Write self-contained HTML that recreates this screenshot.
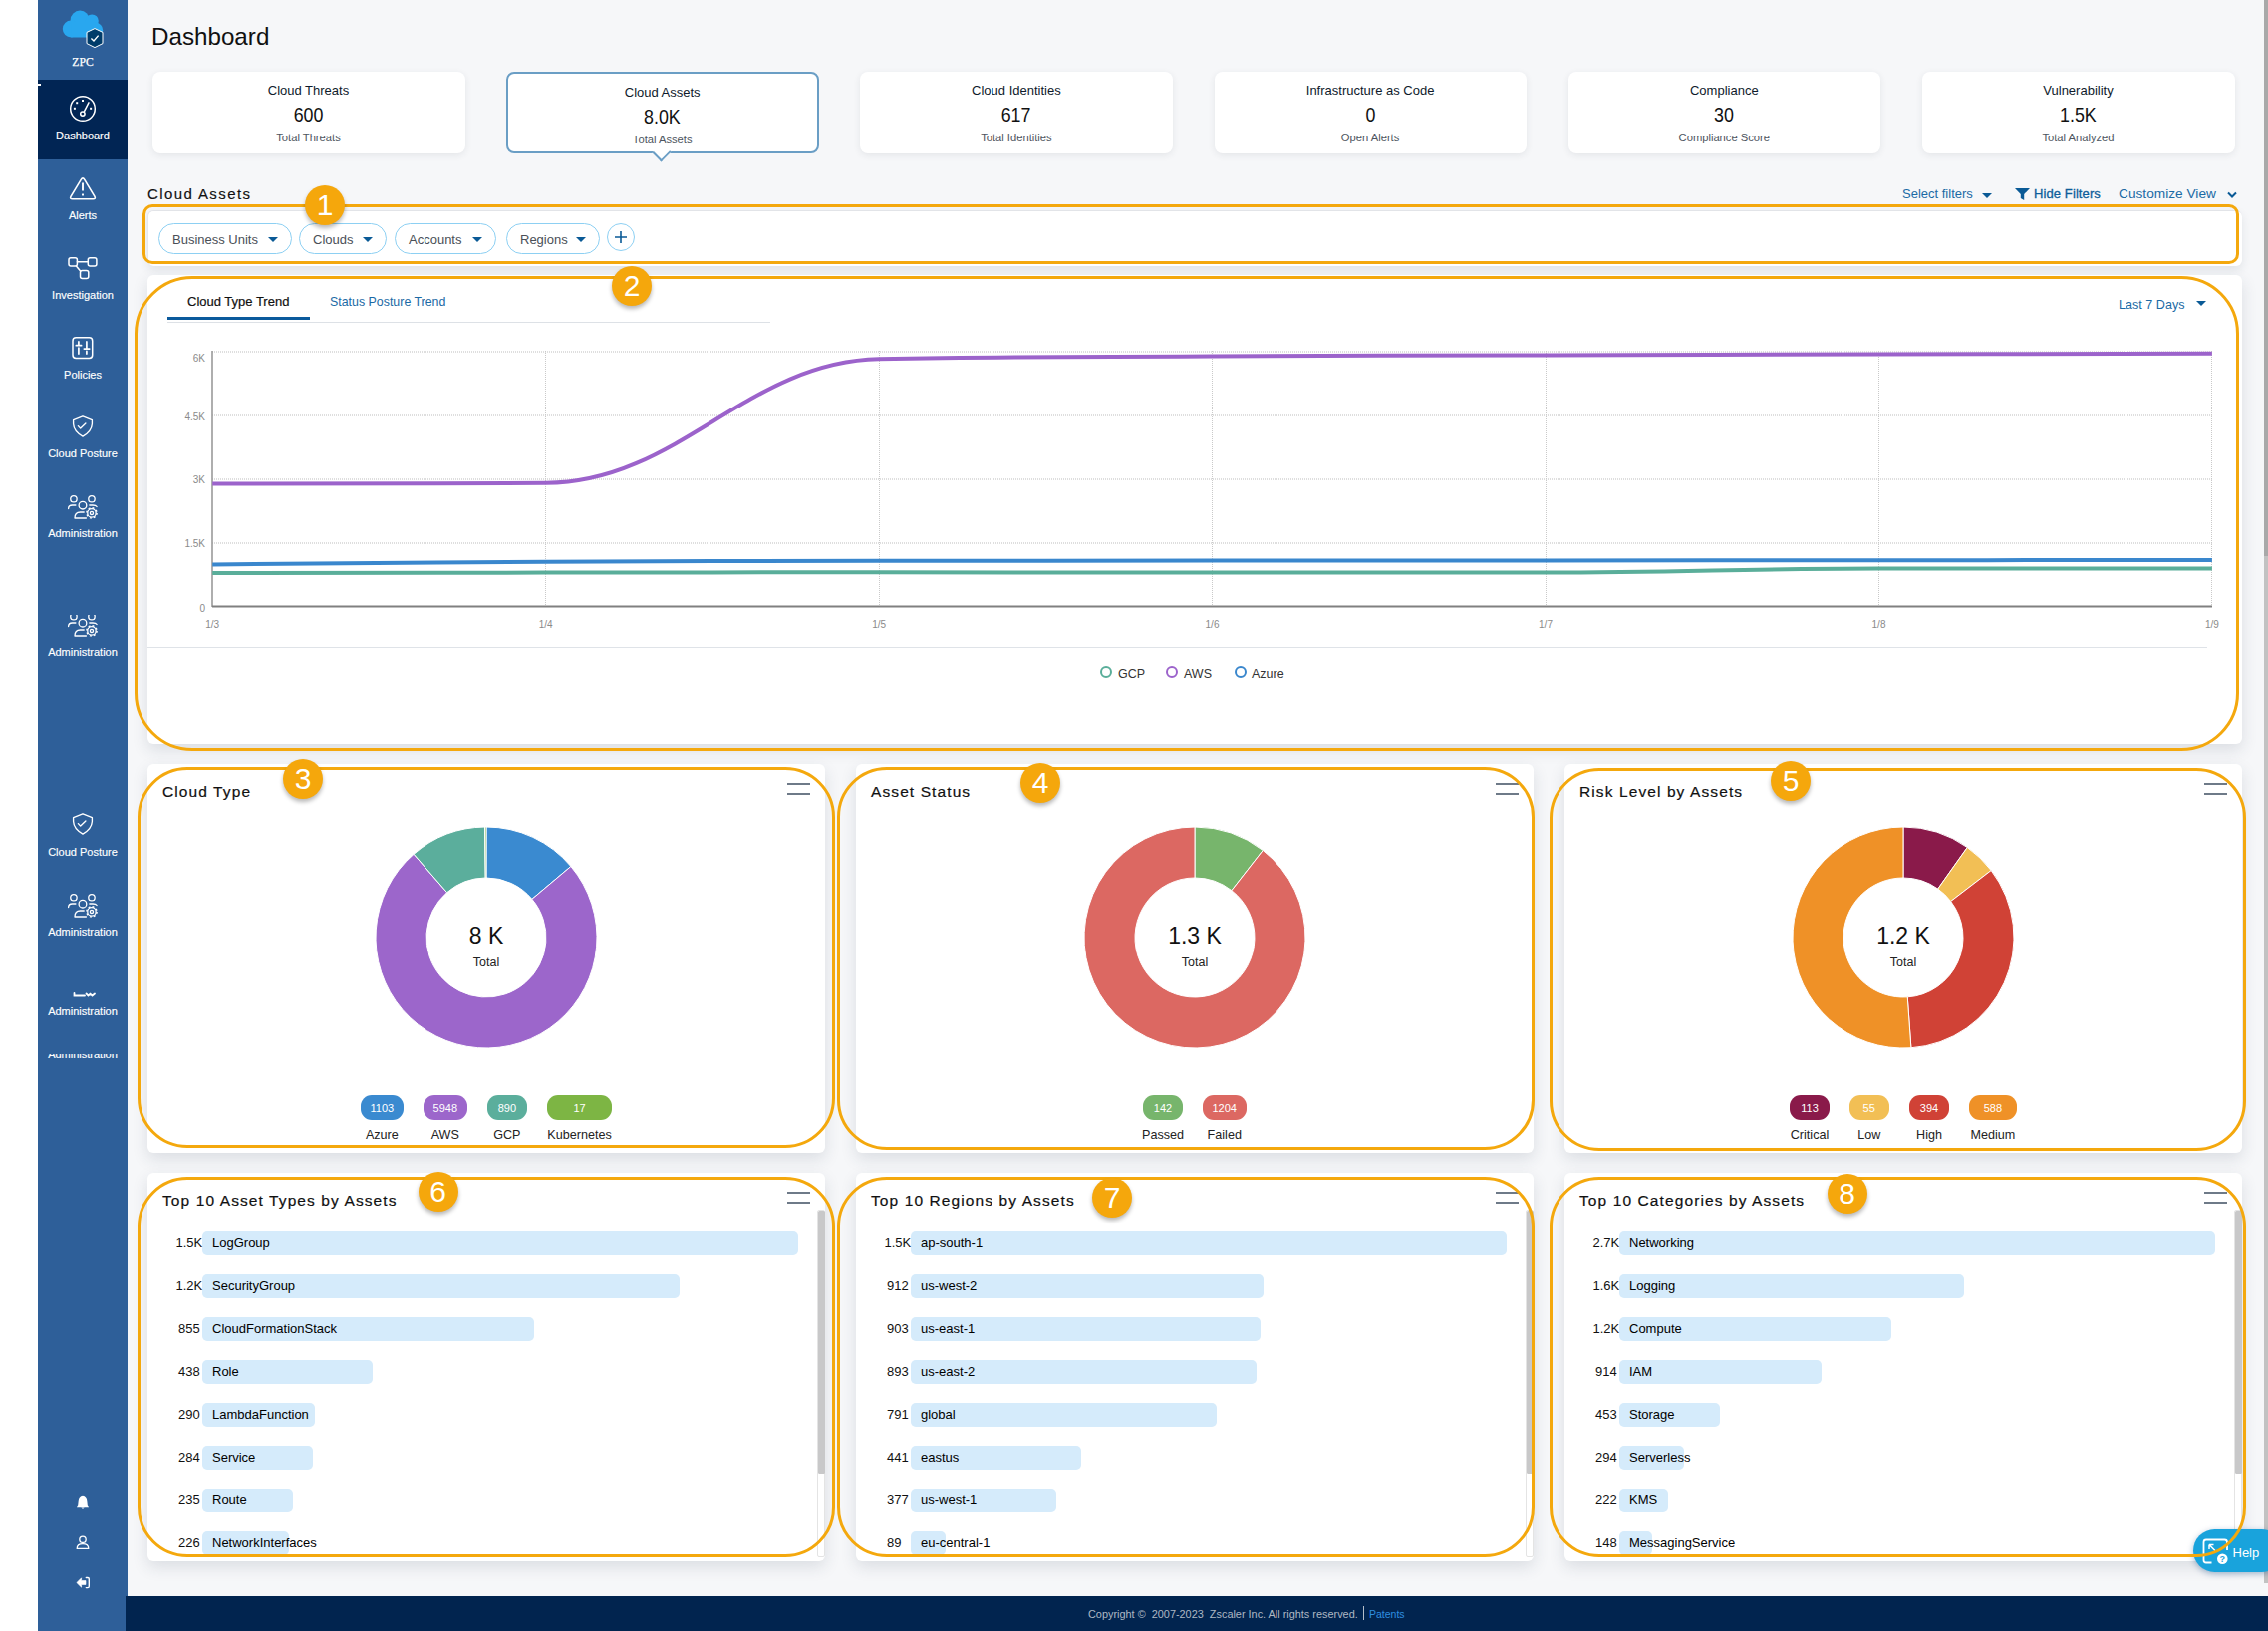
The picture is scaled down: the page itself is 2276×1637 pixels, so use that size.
<!DOCTYPE html>
<html><head><meta charset="utf-8"><title>Dashboard</title>
<style>
*{box-sizing:border-box;margin:0;padding:0}
html,body{width:2276px;height:1637px;overflow:hidden}
body{position:relative;background:#f6f7f9;font-family:"Liberation Sans", sans-serif;color:#1d2430}
.a{position:absolute}
.t{position:absolute;white-space:nowrap;line-height:1}
.card{position:absolute;background:#fff;border-radius:8px;box-shadow:0 6px 16px rgba(40,55,80,.13)}
.stat{position:absolute;background:#fff;border-radius:8px;box-shadow:0 2px 7px rgba(40,50,70,.09);top:72px;width:313.5px;height:82px}
.stat .h{position:absolute;left:0;right:0;top:84px;text-align:center}
.ol{position:absolute;border:3px solid #f4a80d;pointer-events:none;z-index:5}
.badge{position:absolute;width:40px;height:40px;border-radius:50%;background:#f5a70c;color:#fff;font-size:30px;line-height:40px;text-align:center;box-shadow:0 3px 4px rgba(0,0,0,.28);z-index:6}
.navl{position:absolute;left:38px;width:90px;text-align:center;color:#fff;font-size:11px;line-height:1;white-space:nowrap;-webkit-text-stroke:.15px #fff}
.pill{position:absolute;top:224px;height:31px;border:1px solid #8dd0f3;border-radius:16px;background:#fff}
.pill span{position:absolute;top:9px;font-size:13px;color:#4a4f57;line-height:1}
.caret{position:absolute;width:0;height:0;border-left:5px solid transparent;border-right:5px solid transparent;border-top:5px solid #0a5a96}
.ham{position:absolute;width:23px;height:2px;background:#6e7a88}
.lgp{position:absolute;height:25px;border-radius:11px;color:#fff;font-size:11px;line-height:26px;text-align:center}
.lgl{position:absolute;font-size:12.6px;color:#222;white-space:nowrap;line-height:1}
.bar{position:absolute;height:24px;background:#d5ebfb;border-radius:5px}
.bv{position:absolute;font-size:13px;color:#111;text-align:right;line-height:1;white-space:nowrap}
.bl{position:absolute;font-size:13px;color:#000;line-height:1;white-space:nowrap}
</style></head><body>

<div class="a" style="left:0;top:0;width:38px;height:1637px;background:#fff"></div>
<div class="a" style="left:38px;top:0;width:90px;height:1637px;background:#2e5f99"></div>
<div class="a" style="left:38px;top:80px;width:90px;height:80px;background:#012554"></div>
<div class="a" style="left:37px;top:83.5px;width:4px;height:2.5px;background:#fff"></div>
<svg class="a" style="left:38px;top:0" width="90" height="80" viewBox="0 0 90 80">
<g fill="#29a7ef">
<circle cx="42.2" cy="20.2" r="9.6"/><circle cx="54.2" cy="21" r="6.6"/><circle cx="33.3" cy="29" r="8.5"/><circle cx="57.8" cy="30.2" r="7.4"/>
<rect x="33.3" y="22" width="24.5" height="15.5"/>
</g>
<path d="M57,28.6 L65,32.4 L65,43.6 L57,47.6 L49,43.6 L49,32.4 Z" fill="#003c6a" stroke="#fff" stroke-width="1"/>
<path d="M53.4,38.4 L56,41 L60.6,35.6" fill="none" stroke="#fff" stroke-width="1.4"/>
</svg>
<div class="navl" style="top:56.8px;font-family:'Liberation Serif',serif;font-size:11.6px;-webkit-text-stroke:.25px #fff">ZPC</div>
<svg class="a" style="left:38px;top:89px" width="90" height="40" viewBox="0 0 90 40" fill="none" stroke="#fff" stroke-width="1.5" stroke-linecap="round" stroke-linejoin="round"><circle cx="45" cy="20" r="12.3"/><circle cx="44.9" cy="25.1" r="2.2"/><path d="M46.5,22.6 L51,13.8"/><rect x="44" y="11" width="2" height="2" fill="#fff" stroke="none"/><rect x="38.2" y="13.2" width="2" height="2" fill="#fff" stroke="none"/><rect x="35.9" y="18.8" width="2" height="2" fill="#fff" stroke="none"/><rect x="52.1" y="18.8" width="2" height="2" fill="#fff" stroke="none"/></svg>
<div class="navl" style="top:131px;font-size:11px">Dashboard</div>
<svg class="a" style="left:38px;top:170px" width="90" height="40" viewBox="0 0 90 40" fill="none" stroke="#fff" stroke-width="1.5" stroke-linecap="round" stroke-linejoin="round"><path d="M43.2,10.4 Q45,7.4 46.8,10.4 L56.9,27.1 Q58.4,29.7 55.3,29.7 L34.7,29.7 Q31.6,29.7 33.1,27.1 Z" stroke-width="1.6"/><path d="M45,13.6 L45,21.4" stroke-width="1.9" stroke-linecap="butt"/><circle cx="45" cy="25.5" r=".9" fill="#fff" stroke="none"/><rect x="44.1" y="24.7" width="1.8" height="1.6" fill="#fff" stroke="none"/></svg>
<div class="navl" style="top:211px">Alerts</div>
<svg class="a" style="left:38px;top:250px" width="90" height="40" viewBox="0 0 90 40" fill="none" stroke="#fff" stroke-width="1.5" stroke-linecap="round" stroke-linejoin="round"><rect x="31" y="8.7" width="8.4" height="8.4" rx="2"/><rect x="50.3" y="8.7" width="8.6" height="8.4" rx="2"/><rect x="42.5" y="21.6" width="8.3" height="8" rx="2"/><path d="M39.4,12.8 L50.3,12.8 M38.4,17 L42.6,22"/></svg>
<div class="navl" style="top:290.5px">Investigation</div>
<svg class="a" style="left:38px;top:330px" width="90" height="40" viewBox="0 0 90 40" fill="none" stroke="#fff" stroke-width="1.5" stroke-linecap="round" stroke-linejoin="round"><rect x="35" y="8.8" width="19.7" height="20.6" rx="3.2"/><path d="M40.9,12.9 L40.9,16.5 M40.9,19.2 L40.9,25.1 M38.3,16.7 L43.6,16.7 M48.9,12.9 L48.9,20 M48.9,22.4 L48.9,25.1 M46.3,20.1 L51.7,20.1" stroke-width="1.7"/></svg>
<div class="navl" style="top:371px">Policies</div>
<svg class="a" style="left:38px;top:408px" width="90" height="40" viewBox="0 0 90 40" fill="none" stroke="#fff" stroke-width="1.5" stroke-linecap="round" stroke-linejoin="round"><path d="M45,9.8 L35.6,13.6 L35.6,17.5 Q36,25 45,30.1 Q54,25 54.4,17.5 L54.4,13.6 Z" stroke-width="1.35"/><path d="M40.4,19.6 L42.7,22.1 L47.9,17" stroke-width="1.35"/></svg>
<div class="navl" style="top:450px">Cloud Posture</div>
<svg class="a" style="left:38px;top:488px" width="90" height="40" viewBox="0 0 90 40" fill="none" stroke="#fff" stroke-width="1.5" stroke-linecap="round" stroke-linejoin="round"><g transform="translate(25,2)" stroke-width="1.3"><circle cx="10.94" cy="10.73" r="3.2"/><path d="M5.6,20.6 Q5.6,17 9.5,17 L12.9,17"/><circle cx="19.96" cy="17.17" r="3.85"/><path d="M21.2,24 L17.5,24 Q12,24 12,30 L23.4,30"/><circle cx="28.97" cy="10.73" r="3.2"/><path d="M26.8,17 L30,17 Q33.2,17 34.1,18.5"/><circle cx="28.97" cy="24.9" r="4.2"/><circle cx="28.97" cy="24.9" r="5.1" stroke-width="1.5" stroke-dasharray="1.9,2.1" stroke-linecap="butt"/><circle cx="28.97" cy="24.9" r="1.6"/></g></svg>
<div class="navl" style="top:530px">Administration</div>
<div class="a" style="left:0;top:617.2px;width:128px;height:30px;overflow:hidden"><div class="a" style="left:0;top:-617.2px;width:128px;height:660px">
<svg class="a" style="left:38px;top:605.5px" width="90" height="40" viewBox="0 0 90 40" fill="none" stroke="#fff" stroke-width="1.5" stroke-linecap="round" stroke-linejoin="round"><g transform="translate(25,2)" stroke-width="1.3"><circle cx="10.94" cy="10.73" r="3.2"/><path d="M5.6,20.6 Q5.6,17 9.5,17 L12.9,17"/><circle cx="19.96" cy="17.17" r="3.85"/><path d="M21.2,24 L17.5,24 Q12,24 12,30 L23.4,30"/><circle cx="28.97" cy="10.73" r="3.2"/><path d="M26.8,17 L30,17 Q33.2,17 34.1,18.5"/><circle cx="28.97" cy="24.9" r="4.2"/><circle cx="28.97" cy="24.9" r="5.1" stroke-width="1.5" stroke-dasharray="1.9,2.1" stroke-linecap="butt"/><circle cx="28.97" cy="24.9" r="1.6"/></g></svg>
</div></div>
<div class="navl" style="top:648.5px">Administration</div>
<svg class="a" style="left:38px;top:807.2px" width="90" height="40" viewBox="0 0 90 40" fill="none" stroke="#fff" stroke-width="1.5" stroke-linecap="round" stroke-linejoin="round"><path d="M45,9.8 L35.6,13.6 L35.6,17.5 Q36,25 45,30.1 Q54,25 54.4,17.5 L54.4,13.6 Z" stroke-width="1.35"/><path d="M40.4,19.6 L42.7,22.1 L47.9,17" stroke-width="1.35"/></svg>
<div class="navl" style="top:849.5px">Cloud Posture</div>
<svg class="a" style="left:38px;top:888.2px" width="90" height="40" viewBox="0 0 90 40" fill="none" stroke="#fff" stroke-width="1.5" stroke-linecap="round" stroke-linejoin="round"><g transform="translate(25,2)" stroke-width="1.3"><circle cx="10.94" cy="10.73" r="3.2"/><path d="M5.6,20.6 Q5.6,17 9.5,17 L12.9,17"/><circle cx="19.96" cy="17.17" r="3.85"/><path d="M21.2,24 L17.5,24 Q12,24 12,30 L23.4,30"/><circle cx="28.97" cy="10.73" r="3.2"/><path d="M26.8,17 L30,17 Q33.2,17 34.1,18.5"/><circle cx="28.97" cy="24.9" r="4.2"/><circle cx="28.97" cy="24.9" r="5.1" stroke-width="1.5" stroke-dasharray="1.9,2.1" stroke-linecap="butt"/><circle cx="28.97" cy="24.9" r="1.6"/></g></svg>
<div class="navl" style="top:930px">Administration</div>
<svg class="a" style="left:38px;top:990px" width="90" height="14" viewBox="0 0 90 14" fill="none" stroke="#fff" stroke-width="1.8" stroke-linecap="round"><path d="M36.5,7 L36.5,9.5 L47,9.5 M48.5,7.5 L50.5,9.5 L52.5,7.8 L54.5,9.5 L57,7.5"/></svg>
<div class="navl" style="top:1010px">Administration</div>
<div class="a" style="left:38px;top:1058px;width:90px;height:5px;overflow:hidden"><div class="navl" style="left:0;top:-5px">Administration</div></div>
<svg class="a" style="left:70px;top:1498px" width="28" height="100" viewBox="0 0 28 100">
<path d="M13,3.8 Q9,4.2 8.6,9.5 L8.2,13.3 L6.9,15.3 L19.1,15.3 L17.8,13.3 L17.4,9.5 Q17,4.2 13,3.8 Z" fill="#fff"/><path d="M11.3,15.5 Q13,17.8 14.7,15.5 Z" fill="#fff"/>
<g fill="none" stroke="#fff" stroke-width="1.3"><circle cx="13" cy="47.3" r="3.2"/><path d="M7.2,56.4 Q7.2,51.6 13,51.6 Q18.8,51.6 18.8,56.4 Z" stroke-linejoin="round"/></g>
<path d="M6.9,90.5 L11.6,85.8 L11.6,88.5 L16,88.5 L16,92.5 L11.6,92.5 L11.6,95.2 Z" fill="#fff" stroke="#fff" stroke-width=".6" stroke-linejoin="round"/><path d="M16.3,85.5 L18,85.5 Q19.3,85.5 19.3,86.8 L19.3,94.3 Q19.3,95.6 18,95.6 L16.3,95.6" fill="none" stroke="#fff" stroke-width="1.4" stroke-linecap="round"/>
</svg>
<div class="a" style="left:126px;top:1602px;width:2150px;height:35px;background:#01244f"></div>
<div class="t" style="left:1092px;top:1615px;font-size:10.9px;color:#aeb8c4">Copyright&nbsp;©&nbsp;&nbsp;2007-2023&nbsp;&nbsp;Zscaler Inc. All rights reserved.</div>
<div class="a" style="left:1368px;top:1612px;width:1px;height:14px;background:#b4bec9"></div>
<div class="t" style="left:1374px;top:1615px;font-size:10.5px;color:#2f8fe0">Patents</div>
<div class="a" style="left:2272px;top:0;width:4px;height:1589px;background:#c2c2c2"></div><div class="a" style="left:2272px;top:0;width:4px;height:558px;background:#a9a9a9"></div>
<div class="t" style="left:152px;top:25px;font-size:24.2px;color:#111">Dashboard</div>
<div class="stat" style="left:153.0px"></div>
<div class="t" style="left:153.0px;width:313px;text-align:center;top:84px;font-size:13px;color:#0e1a2b">Cloud Threats</div>
<div class="t" style="left:153.0px;width:313px;text-align:center;top:106px;font-size:19.8px;color:#111"><span style="display:inline-block;transform:scaleX(.9)">600</span></div>
<div class="t" style="left:153.0px;width:313px;text-align:center;top:133px;font-size:11.2px;color:#4d5560">Total Threats</div>
<div class="stat" style="left:508.2px;border:2px solid #6a9ec5;box-shadow:none"></div>
<div class="a" style="left:657.2px;top:146px;width:14px;height:14px;background:#fff;border-right:2px solid #6a9ec5;border-bottom:2px solid #6a9ec5;transform:rotate(45deg) scaleX(.9)"></div>
<div class="t" style="left:508.2px;width:313px;text-align:center;top:86px;font-size:13px;color:#0e1a2b">Cloud Assets</div>
<div class="t" style="left:508.2px;width:313px;text-align:center;top:108px;font-size:19.8px;color:#111"><span style="display:inline-block;transform:scaleX(.9)">8.0K</span></div>
<div class="t" style="left:508.2px;width:313px;text-align:center;top:135px;font-size:11.2px;color:#4d5560">Total Assets</div>
<div class="stat" style="left:863.4px"></div>
<div class="t" style="left:863.4px;width:313px;text-align:center;top:84px;font-size:13px;color:#0e1a2b">Cloud Identities</div>
<div class="t" style="left:863.4px;width:313px;text-align:center;top:106px;font-size:19.8px;color:#111"><span style="display:inline-block;transform:scaleX(.9)">617</span></div>
<div class="t" style="left:863.4px;width:313px;text-align:center;top:133px;font-size:11.2px;color:#4d5560">Total Identities</div>
<div class="stat" style="left:1218.6px"></div>
<div class="t" style="left:1218.6px;width:313px;text-align:center;top:84px;font-size:13px;color:#0e1a2b">Infrastructure as Code</div>
<div class="t" style="left:1218.6px;width:313px;text-align:center;top:106px;font-size:19.8px;color:#111"><span style="display:inline-block;transform:scaleX(.9)">0</span></div>
<div class="t" style="left:1218.6px;width:313px;text-align:center;top:133px;font-size:11.2px;color:#4d5560">Open Alerts</div>
<div class="stat" style="left:1573.8px"></div>
<div class="t" style="left:1573.8px;width:313px;text-align:center;top:84px;font-size:13px;color:#0e1a2b">Compliance</div>
<div class="t" style="left:1573.8px;width:313px;text-align:center;top:106px;font-size:19.8px;color:#111"><span style="display:inline-block;transform:scaleX(.9)">30</span></div>
<div class="t" style="left:1573.8px;width:313px;text-align:center;top:133px;font-size:11.2px;color:#4d5560">Compliance Score</div>
<div class="stat" style="left:1929.0px"></div>
<div class="t" style="left:1929.0px;width:313px;text-align:center;top:84px;font-size:13px;color:#0e1a2b">Vulnerability</div>
<div class="t" style="left:1929.0px;width:313px;text-align:center;top:106px;font-size:19.8px;color:#111"><span style="display:inline-block;transform:scaleX(.9)">1.5K</span></div>
<div class="t" style="left:1929.0px;width:313px;text-align:center;top:133px;font-size:11.2px;color:#4d5560">Total Analyzed</div>
<div class="t" style="left:148px;top:186.5px;font-size:15px;-webkit-text-stroke:.15px #111;letter-spacing:1.4px;color:#111">Cloud Assets</div>
<div class="t" style="left:1909px;top:188px;font-size:13px;color:#1b6aa5">Select filters</div>
<div class="caret" style="left:1989px;top:194px"></div>
<svg class="a" style="left:2022px;top:189px" width="15" height="12" viewBox="0 0 15 12"><path d="M0,0 L15,0 L9.2,6 L9.2,12 L5.8,10 L5.8,6 Z" fill="#0a5a96"/></svg>
<div class="t" style="left:2041px;top:188px;font-size:13px;color:#0d5d9a;letter-spacing:.1px;-webkit-text-stroke:.3px #0d5d9a">Hide Filters</div>
<div class="t" style="left:2126px;top:188px;font-size:13.7px;color:#1b6aa5">Customize View</div>
<svg class="a" style="left:2235px;top:192px" width="10" height="8" viewBox="0 0 10 8"><path d="M1,1.5 L5,5.5 L9,1.5" fill="none" stroke="#0a5a96" stroke-width="2"/></svg>
<div class="card" style="left:148px;top:211px;width:2102px;height:56px;border-radius:6px;border-top:1px solid #e2e4e8;border-left:1px solid #e6e8eb;box-shadow:0 4px 10px rgba(40,55,80,.10)"></div>
<div class="pill" style="left:159px;width:134px"><span style="left:13px">Business Units</span><div class="caret" style="right:13px;top:13px"></div></div>
<div class="pill" style="left:300px;width:88px"><span style="left:13px">Clouds</span><div class="caret" style="right:13px;top:13px"></div></div>
<div class="pill" style="left:396px;width:102px"><span style="left:13px">Accounts</span><div class="caret" style="right:13px;top:13px"></div></div>
<div class="pill" style="left:508px;width:94px"><span style="left:13px">Regions</span><div class="caret" style="right:13px;top:13px"></div></div>
<div class="a" style="left:609px;top:224px;width:28px;height:28px;border:1px solid #8dd0f3;border-radius:50%;background:#fff"></div>
<svg class="a" style="left:609px;top:224px" width="28" height="28"><path d="M14,8 L14,20 M8,14 L20,14" stroke="#0a5a96" stroke-width="1.6"/></svg>
<div class="ol" style="left:143px;top:205px;width:2104px;height:60px;border-radius:10px"></div>
<div class="card" style="left:148px;top:276px;width:2102px;height:471px;border-radius:6px"></div>
<div class="t" style="left:188px;top:296px;font-size:13px;color:#111;-webkit-text-stroke:.2px #111">Cloud Type Trend</div>
<div class="t" style="left:331px;top:297px;font-size:12.4px;color:#1b6aa5">Status Posture Trend</div>
<div class="a" style="left:168px;top:323px;width:605px;height:1px;background:#dde1e6"></div>
<div class="a" style="left:168px;top:318px;width:143px;height:3px;background:#0b5a9c"></div>
<div class="t" style="left:2126px;top:300px;font-size:12.6px;color:#1b6aa5">Last 7 Days</div>
<div class="caret" style="left:2204px;top:302px"></div>
<svg class="a" style="left:0;top:0" width="2276" height="700" viewBox="0 0 2276 700"><line x1="213" y1="353" x2="2220" y2="353" stroke="#dedede" stroke-width="2" stroke-dasharray="1,1"/><line x1="213" y1="417" x2="2220" y2="417" stroke="#dedede" stroke-width="2" stroke-dasharray="1,1"/><line x1="213" y1="481" x2="2220" y2="481" stroke="#dedede" stroke-width="2" stroke-dasharray="1,1"/><line x1="213" y1="545" x2="2220" y2="545" stroke="#dedede" stroke-width="2" stroke-dasharray="1,1"/><line x1="547.5" y1="352" x2="547.5" y2="608" stroke="#c9c9c9" stroke-width="1" stroke-dasharray="1,1"/><line x1="882.5" y1="352" x2="882.5" y2="608" stroke="#c9c9c9" stroke-width="1" stroke-dasharray="1,1"/><line x1="1216.5" y1="352" x2="1216.5" y2="608" stroke="#c9c9c9" stroke-width="1" stroke-dasharray="1,1"/><line x1="1551.5" y1="352" x2="1551.5" y2="608" stroke="#c9c9c9" stroke-width="1" stroke-dasharray="1,1"/><line x1="1885.5" y1="352" x2="1885.5" y2="608" stroke="#c9c9c9" stroke-width="1" stroke-dasharray="1,1"/><line x1="2219.5" y1="352" x2="2219.5" y2="608" stroke="#c9c9c9" stroke-width="1" stroke-dasharray="1,1"/><line x1="213" y1="352" x2="213" y2="609" stroke="#9a9a9a" stroke-width="1.6"/><line x1="213" y1="608.5" x2="2220" y2="608.5" stroke="#808080" stroke-width="2"/><path d="M213.20,575.00 C213.20,575.00 413.87,574.74 547.65,574.60 C681.43,574.46 748.32,574.30 882.10,574.30 C1015.88,574.30 1082.77,574.60 1216.55,574.60 C1350.33,574.60 1417.22,574.60 1551.00,574.60 C1684.78,574.60 1751.67,570.60 1885.45,570.60 C2019.23,570.60 2219.90,570.60 2219.90,570.60" fill="none" stroke="#5aae9a" stroke-width="4" stroke-linecap="butt"/><path d="M213.20,566.40 C213.20,566.40 413.87,564.44 547.65,563.70 C681.43,562.96 748.32,562.80 882.10,562.70 C1015.88,562.60 1082.77,562.64 1216.55,562.60 C1350.33,562.56 1417.22,562.58 1551.00,562.50 C1684.78,562.42 1751.67,562.30 1885.45,562.20 C2019.23,562.10 2219.90,562.00 2219.90,562.00" fill="none" stroke="#3a87cd" stroke-width="4" stroke-linecap="butt"/><path d="M213.20,485.60 C213.20,485.60 413.87,485.60 547.65,484.80 C681.43,484.00 748.32,363.10 882.10,360.30 C1015.88,357.50 1082.77,358.26 1216.55,357.50 C1350.33,356.74 1417.22,356.90 1551.00,356.50 C1684.78,356.10 1751.67,355.84 1885.45,355.50 C2019.23,355.16 2219.90,354.80 2219.90,354.80" fill="none" stroke="#9c63cb" stroke-width="4" stroke-linecap="butt"/></svg>
<div class="t" style="left:150px;width:56px;text-align:right;top:354.5px;font-size:10px;color:#8a8a8a">6K</div>
<div class="t" style="left:150px;width:56px;text-align:right;top:413.5px;font-size:10px;color:#8a8a8a">4.5K</div>
<div class="t" style="left:150px;width:56px;text-align:right;top:476.5px;font-size:10px;color:#8a8a8a">3K</div>
<div class="t" style="left:150px;width:56px;text-align:right;top:540.5px;font-size:10px;color:#8a8a8a">1.5K</div>
<div class="t" style="left:150px;width:56px;text-align:right;top:605.5px;font-size:10px;color:#8a8a8a">0</div>
<div class="t" style="left:193.2px;width:40px;text-align:center;top:621.5px;font-size:10px;color:#8a8a8a">1/3</div>
<div class="t" style="left:527.6px;width:40px;text-align:center;top:621.5px;font-size:10px;color:#8a8a8a">1/4</div>
<div class="t" style="left:862.1px;width:40px;text-align:center;top:621.5px;font-size:10px;color:#8a8a8a">1/5</div>
<div class="t" style="left:1196.5px;width:40px;text-align:center;top:621.5px;font-size:10px;color:#8a8a8a">1/6</div>
<div class="t" style="left:1531.0px;width:40px;text-align:center;top:621.5px;font-size:10px;color:#8a8a8a">1/7</div>
<div class="t" style="left:1865.5px;width:40px;text-align:center;top:621.5px;font-size:10px;color:#8a8a8a">1/8</div>
<div class="t" style="left:2199.9px;width:40px;text-align:center;top:621.5px;font-size:10px;color:#8a8a8a">1/9</div>
<div class="a" style="left:148px;top:649px;width:2067px;height:1px;background:#dfe3e8"></div>
<div class="a" style="left:1104px;top:668.2px;width:12px;height:12px;border:2px solid #5aae9a;border-radius:50%"></div>
<div class="t" style="left:1122px;top:670px;font-size:12.5px;color:#333">GCP</div>
<div class="a" style="left:1170px;top:668.2px;width:12px;height:12px;border:2px solid #9c63cb;border-radius:50%"></div>
<div class="t" style="left:1188px;top:670px;font-size:12.5px;color:#333">AWS</div>
<div class="a" style="left:1239px;top:668.2px;width:12px;height:12px;border:2px solid #3a87cd;border-radius:50%"></div>
<div class="t" style="left:1256px;top:670px;font-size:12.5px;color:#333">Azure</div>
<div class="ol" style="left:135px;top:277px;width:2112px;height:477px;border-radius:58px"></div>
<div class="card" style="left:148px;top:767px;width:680px;height:390px;border-radius:6px"></div>
<div class="t" style="left:163px;top:786.5px;font-size:15.5px;-webkit-text-stroke:.2px #111;letter-spacing:1.1px;color:#111">Cloud Type</div>
<div class="ham" style="left:790px;top:786px"></div><div class="ham" style="left:790px;top:796px"></div>
<svg class="a" style="left:373px;top:826px" width="230" height="230" viewBox="373 826 230 230"><path d="M488.00,830.00 A111,111 0 0 1 572.90,869.50 L533.89,902.35 A60,60 0 0 0 488.00,881.00 Z" fill="#3a8ad0" stroke="#fff" stroke-width="1" stroke-linejoin="round"/><path d="M572.90,869.50 A111,111 0 1 1 415.13,857.27 L448.61,895.74 A60,60 0 1 0 533.89,902.35 Z" fill="#9c66cb" stroke="#fff" stroke-width="1" stroke-linejoin="round"/><path d="M415.13,857.27 A111,111 0 0 1 486.51,830.01 L487.19,881.01 A60,60 0 0 0 448.61,895.74 Z" fill="#5bae9c" stroke="#fff" stroke-width="1" stroke-linejoin="round"/><path d="M486.51,830.01 A111,111 0 0 1 488.00,830.00 L488.00,881.00 A60,60 0 0 0 487.19,881.01 Z" fill="#7db544" stroke="#fff" stroke-width="1" stroke-linejoin="round"/></svg>
<div class="t" style="left:428px;width:120px;text-align:center;top:928px;font-size:23px;color:#111">8 K</div>
<div class="t" style="left:428px;width:120px;text-align:center;top:959.5px;font-size:12.5px;color:#222">Total</div>
<div class="lgp" style="left:361.7px;top:1099px;width:43.30000000000001px;background:#3a8ad0">1103</div>
<div class="lgl" style="left:341.7px;width:83.30000000000001px;text-align:center;top:1132.5px">Azure</div>
<div class="lgp" style="left:424.6px;top:1099px;width:44.39999999999998px;background:#9c66cb">5948</div>
<div class="lgl" style="left:404.6px;width:84.39999999999998px;text-align:center;top:1132.5px">AWS</div>
<div class="lgp" style="left:488.7px;top:1099px;width:40.30000000000001px;background:#5bae9c">890</div>
<div class="lgl" style="left:468.7px;width:80.30000000000001px;text-align:center;top:1132.5px">GCP</div>
<div class="lgp" style="left:549px;top:1099px;width:65px;background:#7db544">17</div>
<div class="lgl" style="left:529px;width:105px;text-align:center;top:1132.5px">Kubernetes</div>
<div class="ol" style="left:138px;top:770px;width:700px;height:382px;border-radius:50px"></div>
<div class="card" style="left:859px;top:767px;width:680px;height:390px;border-radius:6px"></div>
<div class="t" style="left:874px;top:786.5px;font-size:15.5px;-webkit-text-stroke:.2px #111;letter-spacing:1.1px;color:#111">Asset Status</div>
<div class="ham" style="left:1501px;top:786px"></div><div class="ham" style="left:1501px;top:796px"></div>
<svg class="a" style="left:1084px;top:826px" width="230" height="230" viewBox="1084 826 230 230"><path d="M1199.00,830.00 A111,111 0 0 1 1267.31,853.51 L1235.92,893.71 A60,60 0 0 0 1199.00,881.00 Z" fill="#77b56c" stroke="#fff" stroke-width="1" stroke-linejoin="round"/><path d="M1267.31,853.51 A111,111 0 1 1 1199.00,830.00 L1199.00,881.00 A60,60 0 1 0 1235.92,893.71 Z" fill="#dc6862" stroke="#fff" stroke-width="1" stroke-linejoin="round"/></svg>
<div class="t" style="left:1139px;width:120px;text-align:center;top:928px;font-size:23px;color:#111">1.3 K</div>
<div class="t" style="left:1139px;width:120px;text-align:center;top:959.5px;font-size:12.5px;color:#222">Total</div>
<div class="lgp" style="left:1147px;top:1099px;width:40px;background:#77b56c">142</div>
<div class="lgl" style="left:1127px;width:80px;text-align:center;top:1132.5px">Passed</div>
<div class="lgp" style="left:1207px;top:1099px;width:43.5px;background:#dc6862">1204</div>
<div class="lgl" style="left:1187px;width:83.5px;text-align:center;top:1132.5px">Failed</div>
<div class="ol" style="left:840px;top:770px;width:700px;height:384px;border-radius:50px"></div>
<div class="card" style="left:1570px;top:767px;width:680px;height:390px;border-radius:6px"></div>
<div class="t" style="left:1585px;top:786.5px;font-size:15.5px;-webkit-text-stroke:.2px #111;letter-spacing:1.1px;color:#111">Risk Level by Assets</div>
<div class="ham" style="left:2212px;top:786px"></div><div class="ham" style="left:2212px;top:796px"></div>
<svg class="a" style="left:1795px;top:826px" width="230" height="230" viewBox="1795 826 230 230"><path d="M1910.00,830.00 A111,111 0 0 1 1974.26,850.49 L1944.73,892.08 A60,60 0 0 0 1910.00,881.00 Z" fill="#8a1a4a" stroke="#fff" stroke-width="1" stroke-linejoin="round"/><path d="M1974.26,850.49 A111,111 0 0 1 1998.17,873.57 L1957.66,904.55 A60,60 0 0 0 1944.73,892.08 Z" fill="#f2bf55" stroke="#fff" stroke-width="1" stroke-linejoin="round"/><path d="M1998.17,873.57 A111,111 0 0 1 1917.88,1051.72 L1914.26,1000.85 A60,60 0 0 0 1957.66,904.55 Z" fill="#d04236" stroke="#fff" stroke-width="1" stroke-linejoin="round"/><path d="M1917.88,1051.72 A111,111 0 1 1 1910.00,830.00 L1910.00,881.00 A60,60 0 1 0 1914.26,1000.85 Z" fill="#ef9127" stroke="#fff" stroke-width="1" stroke-linejoin="round"/></svg>
<div class="t" style="left:1850px;width:120px;text-align:center;top:928px;font-size:23px;color:#111">1.2 K</div>
<div class="t" style="left:1850px;width:120px;text-align:center;top:959.5px;font-size:12.5px;color:#222">Total</div>
<div class="lgp" style="left:1796px;top:1099px;width:40px;background:#8a1a4a">113</div>
<div class="lgl" style="left:1776px;width:80px;text-align:center;top:1132.5px">Critical</div>
<div class="lgp" style="left:1855.7px;top:1099px;width:40.0px;background:#f2bf55">55</div>
<div class="lgl" style="left:1835.7px;width:80.0px;text-align:center;top:1132.5px">Low</div>
<div class="lgp" style="left:1916px;top:1099px;width:40px;background:#d04236">394</div>
<div class="lgl" style="left:1896px;width:80px;text-align:center;top:1132.5px">High</div>
<div class="lgp" style="left:1975.7px;top:1099px;width:48.299999999999955px;background:#ef9127">588</div>
<div class="lgl" style="left:1955.7px;width:88.29999999999995px;text-align:center;top:1132.5px">Medium</div>
<div class="ol" style="left:1555px;top:771px;width:699px;height:384px;border-radius:50px"></div>
<div class="card" style="left:148px;top:1177px;width:680px;height:390px;border-radius:6px"></div>
<div class="t" style="left:163px;top:1196.5px;font-size:15.5px;-webkit-text-stroke:.2px #111;letter-spacing:1.1px;color:#111">Top 10 Asset Types by Assets</div>
<div class="ham" style="left:790px;top:1196px"></div><div class="ham" style="left:790px;top:1206px"></div>
<div class="a" style="left:820px;top:1214px;width:8px;height:349px;border:1px solid #e4e4e4;border-radius:2px;background:#fff"></div>
<div class="a" style="left:821px;top:1215px;width:7px;height:264px;border-radius:1.5px;background:#c8c8c9"></div>
<div class="a" style="left:148px;top:1215px;width:670px;height:348px;overflow:hidden">
<div class="bar" style="left:55px;top:21px;width:598.0px"></div>
<div class="bv" style="left:28.5px;text-align:left;top:26px">1.5K</div>
<div class="bl" style="left:65px;top:26px">LogGroup</div>
<div class="bar" style="left:55px;top:64px;width:479.4px"></div>
<div class="bv" style="left:28.5px;text-align:left;top:69px">1.2K</div>
<div class="bl" style="left:65px;top:69px">SecurityGroup</div>
<div class="bar" style="left:55px;top:107px;width:332.7px"></div>
<div class="bv" style="left:31px;text-align:left;top:112px">855</div>
<div class="bl" style="left:65px;top:112px">CloudFormationStack</div>
<div class="bar" style="left:55px;top:150px;width:170.8px"></div>
<div class="bv" style="left:31px;text-align:left;top:155px">438</div>
<div class="bl" style="left:65px;top:155px">Role</div>
<div class="bar" style="left:55px;top:193px;width:112.7px"></div>
<div class="bv" style="left:31px;text-align:left;top:198px">290</div>
<div class="bl" style="left:65px;top:198px">LambdaFunction</div>
<div class="bar" style="left:55px;top:236px;width:110.5px"></div>
<div class="bv" style="left:31px;text-align:left;top:241px">284</div>
<div class="bl" style="left:65px;top:241px">Service</div>
<div class="bar" style="left:55px;top:279px;width:90.5px"></div>
<div class="bv" style="left:31px;text-align:left;top:284px">235</div>
<div class="bl" style="left:65px;top:284px">Route</div>
<div class="bar" style="left:55px;top:322px;width:87.3px"></div>
<div class="bv" style="left:31px;text-align:left;top:327px">226</div>
<div class="bl" style="left:65px;top:327px">NetworkInterfaces</div>
</div>
<div class="ol" style="left:138px;top:1181px;width:700px;height:382px;border-radius:50px"></div>
<div class="card" style="left:859px;top:1177px;width:680px;height:390px;border-radius:6px"></div>
<div class="t" style="left:874px;top:1196.5px;font-size:15.5px;-webkit-text-stroke:.2px #111;letter-spacing:1.1px;color:#111">Top 10 Regions by Assets</div>
<div class="ham" style="left:1501px;top:1196px"></div><div class="ham" style="left:1501px;top:1206px"></div>
<div class="a" style="left:1531px;top:1214px;width:8px;height:349px;border:1px solid #e4e4e4;border-radius:2px;background:#fff"></div>
<div class="a" style="left:1532px;top:1215px;width:7px;height:264px;border-radius:1.5px;background:#c8c8c9"></div>
<div class="a" style="left:859px;top:1215px;width:670px;height:348px;overflow:hidden">
<div class="bar" style="left:55px;top:21px;width:598.0px"></div>
<div class="bv" style="left:28.5px;text-align:left;top:26px">1.5K</div>
<div class="bl" style="left:65px;top:26px">ap-south-1</div>
<div class="bar" style="left:55px;top:64px;width:354.0px"></div>
<div class="bv" style="left:31px;text-align:left;top:69px">912</div>
<div class="bl" style="left:65px;top:69px">us-west-2</div>
<div class="bar" style="left:55px;top:107px;width:350.8px"></div>
<div class="bv" style="left:31px;text-align:left;top:112px">903</div>
<div class="bl" style="left:65px;top:112px">us-east-1</div>
<div class="bar" style="left:55px;top:150px;width:347.0px"></div>
<div class="bv" style="left:31px;text-align:left;top:155px">893</div>
<div class="bl" style="left:65px;top:155px">us-east-2</div>
<div class="bar" style="left:55px;top:193px;width:307.0px"></div>
<div class="bv" style="left:31px;text-align:left;top:198px">791</div>
<div class="bl" style="left:65px;top:198px">global</div>
<div class="bar" style="left:55px;top:236px;width:170.8px"></div>
<div class="bv" style="left:31px;text-align:left;top:241px">441</div>
<div class="bl" style="left:65px;top:241px">eastus</div>
<div class="bar" style="left:55px;top:279px;width:145.7px"></div>
<div class="bv" style="left:31px;text-align:left;top:284px">377</div>
<div class="bl" style="left:65px;top:284px">us-west-1</div>
<div class="bar" style="left:55px;top:322px;width:34.6px"></div>
<div class="bv" style="left:31px;text-align:left;top:327px">89</div>
<div class="bl" style="left:65px;top:327px">eu-central-1</div>
</div>
<div class="ol" style="left:840px;top:1181px;width:700px;height:382px;border-radius:50px"></div>
<div class="card" style="left:1570px;top:1177px;width:680px;height:390px;border-radius:6px"></div>
<div class="t" style="left:1585px;top:1196.5px;font-size:15.5px;-webkit-text-stroke:.2px #111;letter-spacing:1.1px;color:#111">Top 10 Categories by Assets</div>
<div class="ham" style="left:2212px;top:1196px"></div><div class="ham" style="left:2212px;top:1206px"></div>
<div class="a" style="left:2242px;top:1214px;width:8px;height:349px;border:1px solid #e4e4e4;border-radius:2px;background:#fff"></div>
<div class="a" style="left:2243px;top:1215px;width:7px;height:264px;border-radius:1.5px;background:#c8c8c9"></div>
<div class="a" style="left:1570px;top:1215px;width:670px;height:348px;overflow:hidden">
<div class="bar" style="left:55px;top:21px;width:598.0px"></div>
<div class="bv" style="left:28.5px;text-align:left;top:26px">2.7K</div>
<div class="bl" style="left:65px;top:26px">Networking</div>
<div class="bar" style="left:55px;top:64px;width:346.0px"></div>
<div class="bv" style="left:28.5px;text-align:left;top:69px">1.6K</div>
<div class="bl" style="left:65px;top:69px">Logging</div>
<div class="bar" style="left:55px;top:107px;width:273.0px"></div>
<div class="bv" style="left:28.5px;text-align:left;top:112px">1.2K</div>
<div class="bl" style="left:65px;top:112px">Compute</div>
<div class="bar" style="left:55px;top:150px;width:202.8px"></div>
<div class="bv" style="left:31px;text-align:left;top:155px">914</div>
<div class="bl" style="left:65px;top:155px">IAM</div>
<div class="bar" style="left:55px;top:193px;width:100.7px"></div>
<div class="bv" style="left:31px;text-align:left;top:198px">453</div>
<div class="bl" style="left:65px;top:198px">Storage</div>
<div class="bar" style="left:55px;top:236px;width:65.0px"></div>
<div class="bv" style="left:31px;text-align:left;top:241px">294</div>
<div class="bl" style="left:65px;top:241px">Serverless</div>
<div class="bar" style="left:55px;top:279px;width:48.6px"></div>
<div class="bv" style="left:31px;text-align:left;top:284px">222</div>
<div class="bl" style="left:65px;top:284px">KMS</div>
<div class="bar" style="left:55px;top:322px;width:33.0px"></div>
<div class="bv" style="left:31px;text-align:left;top:327px">148</div>
<div class="bl" style="left:65px;top:327px">MessagingService</div>
</div>
<div class="ol" style="left:1555px;top:1181px;width:699px;height:382px;border-radius:50px"></div>
<div class="badge" style="left:306px;top:186px">1</div>
<div class="badge" style="left:614px;top:267px">2</div>
<div class="badge" style="left:284px;top:762px">3</div>
<div class="badge" style="left:1024px;top:766px">4</div>
<div class="badge" style="left:1777px;top:764px">5</div>
<div class="badge" style="left:419.5px;top:1176px">6</div>
<div class="badge" style="left:1096px;top:1182px">7</div>
<div class="badge" style="left:1833.5px;top:1178px">8</div>
<div class="a" style="left:2201px;top:1535px;width:90px;height:43px;border-radius:22px;background:#19a3dc;box-shadow:0 2px 6px rgba(0,60,120,.35);z-index:4"></div>
<svg class="a" style="left:2208px;top:1542px;z-index:4" width="32" height="32" viewBox="0 0 32 32"><path d="M11.5,26.5 L6,26.5 Q3.5,26.5 3.5,24 L3.5,6 Q3.5,3.5 6,3.5 L24.5,3.5 Q27,3.5 27,6 L27,14" fill="none" stroke="#fff" stroke-width="1.8"/><path d="M9,8.5 L16,15.5 M9,8.5 L9,13 M9,8.5 L13.5,8.5" stroke="#fff" stroke-width="1.5" fill="none"/><circle cx="22.3" cy="22.7" r="5.3" fill="#fff"/><text x="22.3" y="26" font-size="9" font-weight="700" text-anchor="middle" fill="#19a3dc" font-family="Liberation Sans">?</text></svg>
<div class="t" style="left:2240.5px;top:1552px;font-size:13px;color:#fff;z-index:4">Help</div>
</body></html>
